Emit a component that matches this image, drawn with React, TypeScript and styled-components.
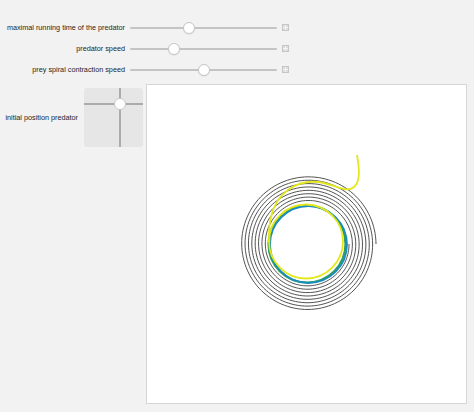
import React from 'react';
import styled, { createGlobalStyle } from 'styled-components';

const GlobalStyle = createGlobalStyle`
  html, body {
    margin: 0;
    padding: 0;
    background: #f2f2f2;
    font-family: "Liberation Sans", Arial, sans-serif;
  }
`;

const Page = styled.main`
  width: 474px;
  height: 412px;
  padding-top: 17px;
  box-sizing: border-box;
  overflow: hidden;
`;

const SliderRow = styled.div`
  display: grid;
  grid-template-columns: 125px 148px 6px;
  column-gap: 4px;
  align-items: center;
  height: 21px;
`;

const Label = styled.span`
  font-size: 7.25px;
  color: #262626;
  text-align: right;
  white-space: nowrap;
`;

const Track = styled.div`
  position: relative;
  height: 2px;
  margin-left: 1px;
  background: #c4c4c4;
  border-radius: 1px;
`;

const Thumb = styled.div<{ $pos: number }>`
  position: absolute;
  top: 50%;
  left: ${({ $pos }) => $pos * 100}%;
  width: 12px;
  height: 12px;
  margin: -6px 0 0 -6px;
  box-sizing: border-box;
  border-radius: 50%;
  background: #fff;
  border: 1px solid #c8c8c8;
  box-shadow: 0 0.5px 1px rgba(0, 0, 0, 0.12);
`;

const PlusBox = styled.div`
  width: 5px;
  height: 5px;
  margin-left: 1px;
  border: 1px solid #c6c6c6;
  background: #dcdcdc;
  position: relative;
  &::before,
  &::after {
    content: '';
    position: absolute;
    background: #f4f4f4;
  }
  &::before {
    left: 2px;
    top: 0;
    width: 1px;
    height: 5px;
  }
  &::after {
    left: 0;
    top: 2px;
    width: 5px;
    height: 1px;
  }
`;

const Lower = styled.section`
  display: flex;
  align-items: flex-start;
  margin-top: 4px;
`;

const PadGroup = styled.div`
  display: flex;
  align-items: center;
  gap: 6px;
  margin-top: 4px;
  width: 143px;
`;

const PadLabel = styled(Label)`
  width: 78px;
`;

const Pad = styled.div`
  position: relative;
  width: 59px;
  height: 59px;
  border-radius: 3px;
  background: #e6e6e6;
`;

const PadLine = styled.div<{ $vertical?: boolean }>`
  position: absolute;
  background: #ababab;
  ${({ $vertical }) =>
    $vertical
      ? 'left: 35px; top: 0; bottom: 0; width: 2px;'
      : 'top: 15px; left: 0; right: 0; height: 2px;'}
`;

const PadThumb = styled.div`
  position: absolute;
  left: 30px;
  top: 10px;
  width: 12px;
  height: 12px;
  box-sizing: border-box;
  border-radius: 50%;
  background: #fff;
  border: 1px solid #c8c8c8;
`;

const Plot = styled.div`
  width: 321px;
  height: 320px;
  margin-left: 3px;
  box-sizing: border-box;
  background: #fff;
  border: 1px solid #d6d6d6;
`;

const sliders = [
  { label: 'maximal running time of the predator', pos: 0.4 },
  { label: 'predator speed', pos: 0.3 },
  { label: 'prey spiral contraction speed', pos: 0.5 },
];

const spiralPath = (cx: number, cy: number) => {
  const turns = 8;
  const steps = turns * 120;
  const pts: string[] = [];
  for (let i = 0; i <= steps; i++) {
    const t = (i / steps) * turns * 2 * Math.PI;
    const r = 41 + (27 * i) / steps;
    pts.push(`${(cx + r * Math.cos(t)).toFixed(2)},${(cy + r * Math.sin(t)).toFixed(2)}`);
  }
  return 'M' + pts.join(' L');
};

const App: React.FC = () => (
  <Page>
    <GlobalStyle />
    {sliders.map((s) => (
      <SliderRow key={s.label}>
        <Label>{s.label}</Label>
        <Track>
          <Thumb $pos={s.pos} />
        </Track>
        <PlusBox />
      </SliderRow>
    ))}

    <Lower>
      <PadGroup>
        <PadLabel>initial position predator</PadLabel>
        <Pad>
          <PadLine />
          <PadLine $vertical />
          <PadThumb />
        </Pad>
      </PadGroup>
      <Plot>
        <svg width="319" height="318" viewBox="0 0 319 318">
          <path d={spiralPath(161, 159)} fill="none" stroke="#4a4a4a" strokeWidth="0.95" />
          <circle cx="160" cy="159" r="38.5" fill="none" stroke="#2f9e5a" strokeWidth="2.2" />
          <circle cx="161.5" cy="159.5" r="38.5" fill="none" stroke="#1a8cc0" strokeWidth="1.8" />
          <circle cx="159" cy="156.5" r="37" fill="none" stroke="#e3e81c" strokeWidth="1.8" />
          <path
            d="M210,70 C212,82 214,96 207,102 C199,109 188,99 171,97 C151,95 130,106 124,132 C121,145 122,152 122.5,157"
            fill="none"
            stroke="#e3e81c"
            strokeWidth="1.8"
          />
        </svg>
      </Plot>
    </Lower>
  </Page>
);

export default App;
